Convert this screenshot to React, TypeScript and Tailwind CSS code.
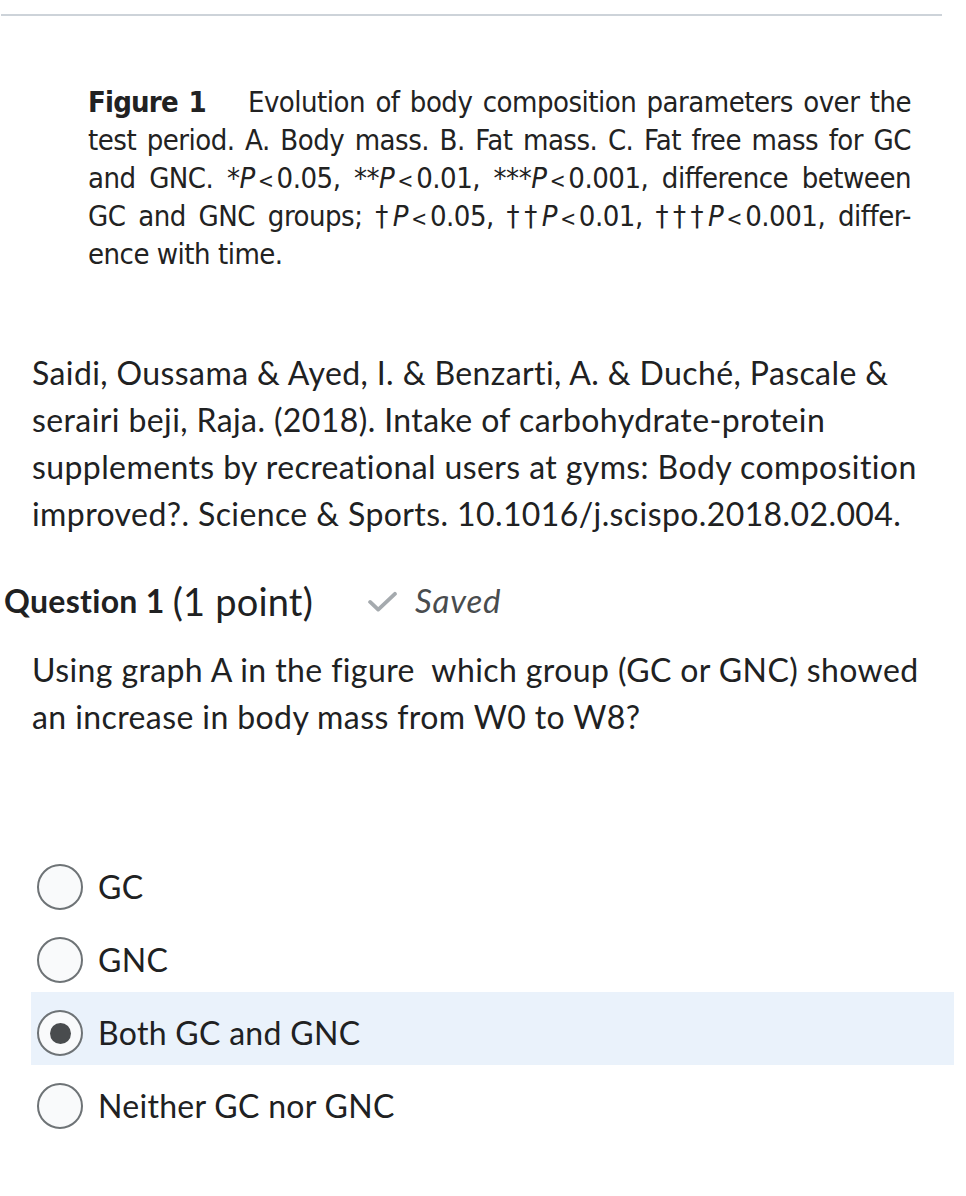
const Lt = () => <span className="text-[21px] leading-none">&thinsp;&lt;&thinsp;</span>;

const captionLines: React.ReactNode[] = [
  <>
    <span className="font-bold tracking-[-0.8px]">Figure 1</span>
    <span className="inline-block w-[42px]" />
    Evolution of body composition parameters over the
  </>,
  <>test period. A. Body mass. B. Fat mass. C. Fat free mass for GC</>,
  <>
    and GNC. *<i>P</i>
    <Lt />
    0.05, **<i>P</i>
    <Lt />
    0.01, ***<i>P</i>
    <Lt />
    0.001, difference between
  </>,
  <>
    GC and GNC groups; †<i>P</i>
    <Lt />
    0.05, ††<i>P</i>
    <Lt />
    0.01, †††<i>P</i>
    <Lt />
    0.001, differ-
  </>,
];

const options = ['GC', 'GNC', 'Both GC and GNC', 'Neither GC nor GNC'];

const Radio = ({ checked }: { checked: boolean }) => (
  <span className="flex h-[46px] w-[46px] flex-shrink-0 items-center justify-center rounded-full border-2 border-[#6e7376] bg-[#f9fafb]">
    {checked && <span className="h-[21px] w-[21px] rounded-full bg-[#494c4e]" />}
  </span>
);

export default function App() {
  const selected = 2;

  return (
    <div className="min-h-[1196px] bg-white font-['Lato','Noto_Sans',sans-serif] text-[#202122] [font-variant-ligatures:none]">
      <div className="pt-[14px] pl-[1px]">
        <div className="h-[2px] w-[941px] bg-[#cdd3d9]" />
      </div>

      {/* figure caption */}
      <div className="ml-[88px] mt-[67px] w-[823px] font-['DejaVu_Sans_Condensed','DejaVu_Sans',sans-serif] text-[29px] leading-[38px] tracking-[-0.5px] text-[#222] [font-stretch:condensed]">
        {captionLines.map((line, i) => (
          <div key={i} className="h-[38px] whitespace-nowrap text-justify [text-align-last:justify]">
            {line}
          </div>
        ))}
        <div className="h-[38px]">ence with time.</div>
      </div>

      {/* citation */}
      <p className="ml-[32px] mt-[76px] text-[32px] leading-[47px] tracking-[0.4px]">
        Saidi, Oussama &amp; Ayed, I. &amp; Benzarti, A. &amp; Duché, Pascale &amp;
        <br />
        serairi beji, Raja. (2018). Intake of carbohydrate-protein
        <br />
        supplements by recreational users at gyms: Body composition
        <br />
        improved?. Science &amp; Sports. 10.1016/j.scispo.2018.02.004.
      </p>

      {/* question header */}
      <div className="mt-[42px] ml-[4px] flex h-[44px] items-center">
        <span className="text-[32px] font-bold tracking-[0.3px]">Question 1</span>
        <span className="ml-[8px] text-[38px] tracking-[0.2px]">(1 point)</span>
        <svg className="ml-[54px] h-[21px] w-[31px]" viewBox="0 0 32 22" fill="none">
          <path d="M3 11.5 L11.5 19.5 L29 3" stroke="#a5aaae" strokeWidth="4" strokeLinecap="round" strokeLinejoin="round" />
        </svg>
        <span className="ml-[17px] text-[33px] italic tracking-[0.8px] text-[#494c4e]">Saved</span>
      </div>

      {/* question text */}
      <p className="ml-[32px] mt-[23px] text-[32px] leading-[47px] tracking-[0.4px]">
        Using graph A in the figure&nbsp; which group (GC or GNC) showed
        <br />
        an increase in body mass from W0 to W8?
      </p>

      {/* options */}
      <div className="ml-[31px] mt-[106px] w-[923px]">
        {options.map((opt, i) => (
          <label
            key={opt}
            className={`flex h-[73px] items-start gap-[15px] pl-[6px] pt-[18px] ${
              i === selected ? 'bg-[#eaf2fb]' : ''
            }`}
          >
            <Radio checked={i === selected} />
            <span className="text-[32px] leading-[46px] tracking-[0.3px]">{opt}</span>
          </label>
        ))}
      </div>
    </div>
  );
}
